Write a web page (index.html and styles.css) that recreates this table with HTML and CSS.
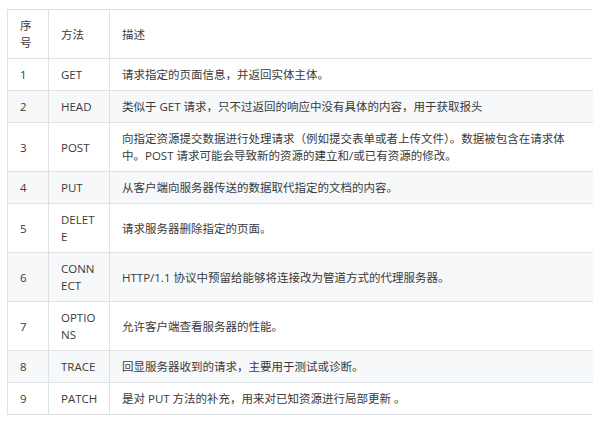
FILE: index.html
```html
<!DOCTYPE html>
<html lang="zh-CN">
<head>
<meta charset="utf-8">
<title>HTTP 请求方法</title>
<link rel="stylesheet" href="styles.css">
</head>
<body>
<table class="methods">
  <colgroup>
    <col class="c-no">
    <col class="c-method">
    <col class="c-desc">
  </colgroup>
  <thead>
    <tr><th>序号</th><th>方法</th><th>描述</th></tr>
  </thead>
  <tbody>
    <tr><td>1</td><td>GET</td><td>请求指定的页面信息，并返回实体主体。</td></tr>
    <tr><td>2</td><td>HEAD</td><td>类似于 GET 请求，只不过返回的响应中没有具体的内容，用于获取报头</td></tr>
    <tr><td>3</td><td>POST</td><td>向指定资源提交数据进行处理请求（例如提交表单或者上传文件）。数据被包含在请求体中。POST 请求可能会导致新的资源的建立和/或已有资源的修改。</td></tr>
    <tr><td>4</td><td>PUT</td><td>从客户端向服务器传送的数据取代指定的文档的内容。</td></tr>
    <tr><td>5</td><td>DELETE</td><td>请求服务器删除指定的页面。</td></tr>
    <tr><td>6</td><td>CONNECT</td><td>HTTP/1.1 协议中预留给能够将连接改为管道方式的代理服务器。</td></tr>
    <tr><td>7</td><td>OPTIONS</td><td>允许客户端查看服务器的性能。</td></tr>
    <tr><td>8</td><td>TRACE</td><td>回显服务器收到的请求，主要用于测试或诊断。</td></tr>
    <tr><td>9</td><td>PATCH</td><td>是对 PUT 方法的补充，用来对已知资源进行局部更新 。</td></tr>
  </tbody>
</table>
</body>
</html>
```
FILE: styles.css
```css
html, body {
  background: #ffffff;
}
body {
  margin: 9px 7px;
  font-family: "Open Sans", "Noto Sans CJK SC", sans-serif;
  font-size: 11.5px;
  line-height: 17px;
  color: #3a3a3a;
}
.methods {
  border-collapse: collapse;
  table-layout: fixed;
  width: 586px;
}
.c-no { width: 41px; }
.c-method { width: 61px; }
.c-desc { width: 484px; }
.methods th,
.methods td {
  border: 1px solid #dfe2e5;
  padding: 7px 10px 7px 12px;
  text-align: left;
  vertical-align: middle;
  font-weight: normal;
  word-break: break-all;
}
.methods tbody tr:nth-child(even) {
  background: #f6f8fa;
}
```
